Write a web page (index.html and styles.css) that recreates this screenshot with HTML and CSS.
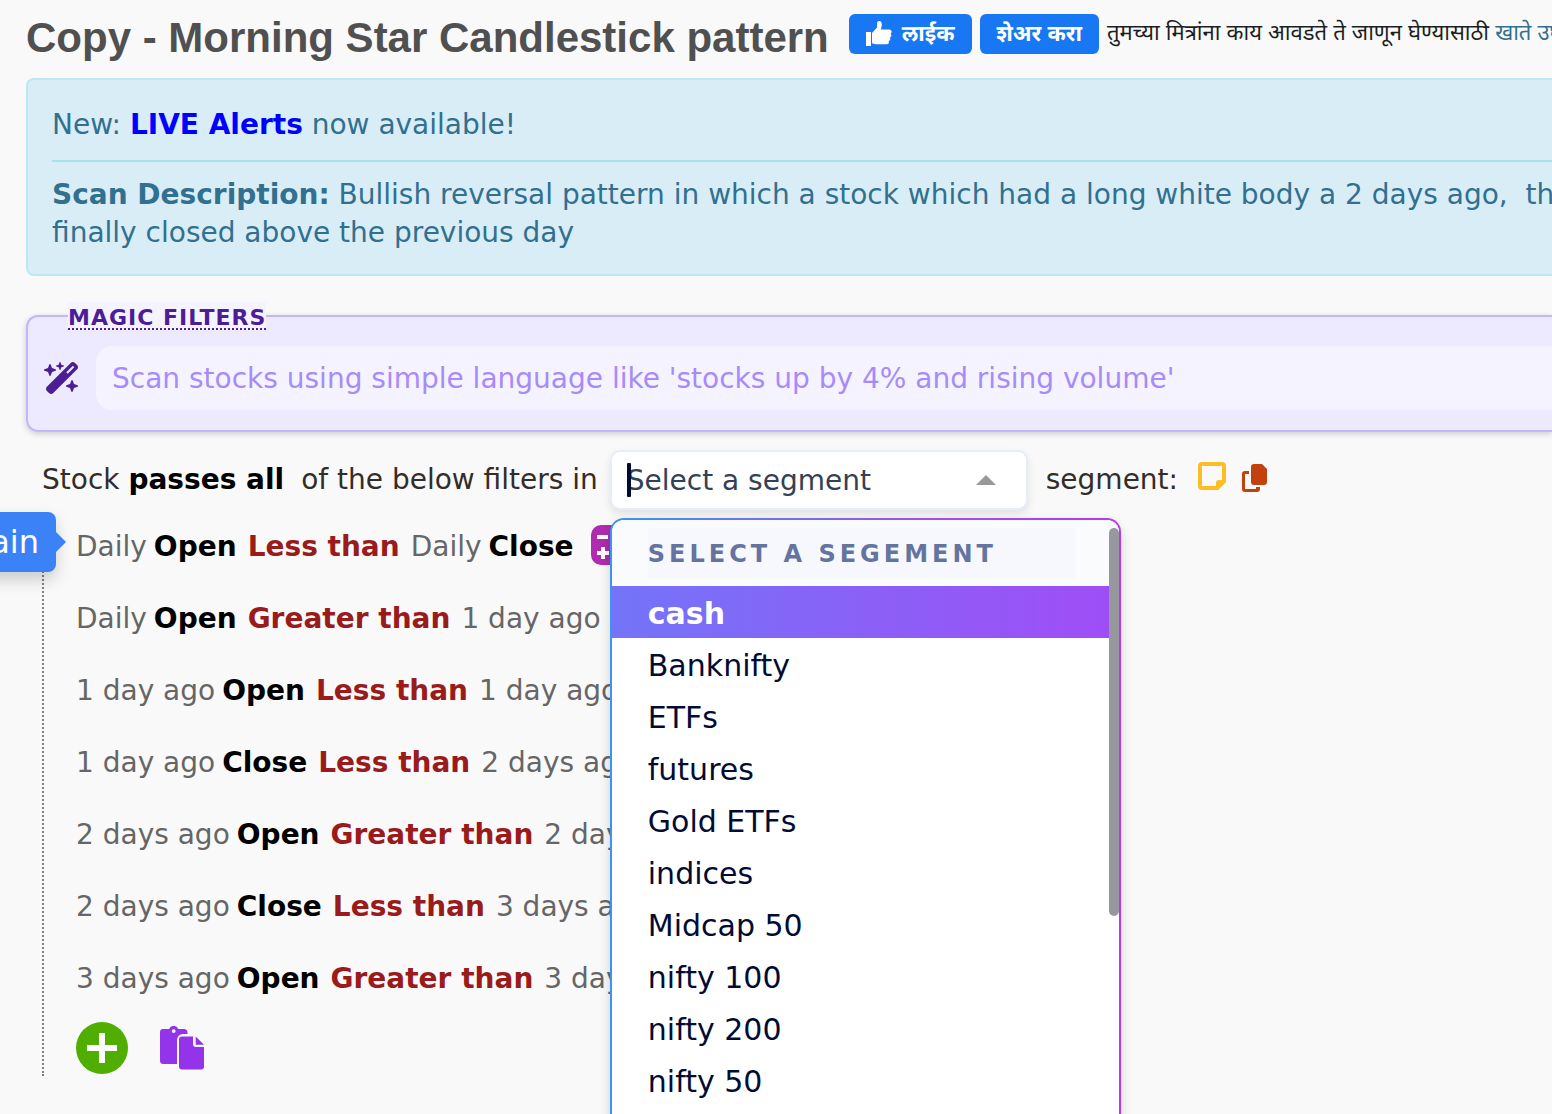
FILE: index.html
```html
<!DOCTYPE html>
<html lang="en">
<head>
<meta charset="utf-8">
<title>Copy - Morning Star Candlestick pattern</title>
<link rel="stylesheet" href="styles.css">
</head>
<body>
<header class="top">
  <h1 class="title">Copy - Morning Star Candlestick pattern</h1>
  <div class="social" lang="mr">
    <button class="fb" type="button">
      <svg class="thumb" viewBox="0 0 26 26" aria-hidden="true"><path fill="#fff" d="M0 11h5v14H0zM6 12l5-5.500V2.500C11 .8 12.200 0 13.300 0c1.800 0 2.500 1.600 2.500 3.800 0 1.800-.6 3.500-1 4.700H23c1.700 0 2.600 1 2.600 2.200 0 1-.6 1.700-1.300 2 .7.3 1.100 1 1.100 1.800 0 1.100-.8 1.900-1.700 2.100.4.4.6.9.6 1.500 0 1-.7 1.800-1.700 2 .2.300.3.700.3 1.100 0 1.200-.9 2-2.200 2H11c-2 0-3.500-.5-5-1z"/></svg>
      <span>लाईक</span>
    </button>
    <button class="fb" type="button">शेअर करा</button>
    <p class="hint">तुमच्या मित्रांना काय आवडते ते जाणून घेण्यासाठी <a href="#">खाते उघडा</a></p>
  </div>
</header>

<main class="page">
  <section class="notice">
    <p class="news">New: <a href="#">LIVE Alerts</a> now available!</p>
    <p class="about"><b>Scan Description:</b> Bullish reversal pattern in which a stock which had a long white body a 2 days ago,&nbsp; then<br>finally closed above the previous day</p>
  </section>

  <fieldset class="magic">
    <legend>MAGIC FILTERS</legend>
    <div class="magic-row">
      <svg class="wand" viewBox="0 0 576 512" aria-hidden="true"><path fill="#4c1d95" d="M234.700 42.700L197 56.800c-3 1.100-5 4-5 7.200s2 6.100 5 7.200l37.700 14.100L248.800 123c1.100 3 4 5 7.200 5s6.100-2 7.200-5l14.100-37.700L315 71.200c3-1.100 5-4 5-7.200s-2-6.100-5-7.200L277.300 42.700 263.200 5c-1.100-3-4-5-7.200-5s-6.100 2-7.200 5L234.700 42.700zM46.100 395.400c-18.700 18.700-18.700 49.100 0 67.900l34.600 34.600c18.700 18.700 49.100 18.700 67.900 0L529.900 116.500c18.700-18.700 18.700-49.100 0-67.900L495.300 14.100c-18.700-18.700-49.100-18.700-67.900 0L46.100 395.400zM484.600 82.600l-105 105-23.300-23.300 105-105 23.300 23.300zM7.500 117.200C3 118.900 0 123.200 0 128s3 9.100 7.500 10.800L64 160l21.200 56.500c1.700 4.500 6 7.500 10.800 7.500s9.100-3 10.800-7.500L128 160l56.500-21.200c4.500-1.700 7.500-6 7.500-10.800s-3-9.100-7.500-10.800L128 96 106.800 39.500C105.100 35 100.800 32 96 32s-9.100 3-10.800 7.500L64 96 7.500 117.200zm352 256c-4.500 1.700-7.500 6-7.500 10.800s3 9.100 7.500 10.800L416 416l21.200 56.500c1.700 4.500 6 7.500 10.800 7.500s9.100-3 10.800-7.500L480 416l56.500-21.200c4.500-1.700 7.500-6 7.500-10.800s-3-9.100-7.500-10.800L480 352l-21.200-56.500c-1.700-4.500-6-7.500-10.800-7.500s-9.100 3-10.800 7.500L416 352l-56.500 21.200z"/></svg>
      <input class="magic-input" type="text" aria-label="Magic filters" placeholder="Scan stocks using simple language like 'stocks up by 4% and rising volume'">
    </div>
  </fieldset>

  <section class="scan">
    <div class="scan-head">
      <span>Stock <b>passes all</b></span>
      <span class="scan-of">of the below filters in</span>
      <div class="picker">
        <label class="combo">
          <input type="text" class="combo-input" role="combobox" aria-expanded="true" aria-controls="segments" aria-label="Segment" placeholder="Select a segment">
          <span class="caret"></span>
          <span class="arrow"></span>
        </label>
        <div class="menu">
          <div class="menu-head"><span>SELECT A SEGEMENT</span></div>
          <ul class="options" id="segments" role="listbox">
            <li class="active" role="option" aria-selected="true">cash</li>
            <li role="option">Banknifty</li>
            <li role="option">ETFs</li>
            <li role="option">futures</li>
            <li role="option">Gold ETFs</li>
            <li role="option">indices</li>
            <li role="option">Midcap 50</li>
            <li role="option">nifty 100</li>
            <li role="option">nifty 200</li>
            <li role="option">nifty 50</li>
          </ul>
          <span class="thumb-bar"></span>
        </div>
      </div>
      <span class="scan-end">segment:</span>
      <button class="icon-btn" type="button" aria-label="Note"><svg width="28" height="28" viewBox="0 0 28 28"><path fill="none" stroke="#fbbf24" stroke-width="4" stroke-linejoin="round" d="M4 2h20a2 2 0 0 1 2 2v15l-7 7H4a2 2 0 0 1-2-2V4a2 2 0 0 1 2-2z"/><path fill="#fbbf24" d="M28 18h-7a3 3 0 0 0-3 3v7h2l8-8z"/></svg></button>
      <button class="icon-btn copy" type="button" aria-label="Copy"><svg width="26" height="30" viewBox="0 0 26 30"><path fill="#c2410c" d="M12 1h8l5 5v13a3 3 0 0 1-3 3H12a3 3 0 0 1-3-3V4a3 3 0 0 1 3-3zM3 8h4v3H3v15h11v-2h4v2a3 3 0 0 1-3 3H3a3 3 0 0 1-3-3V11a3 3 0 0 1 3-3z"/></svg></button>
    </div>

    <div class="group">
      <span class="tag">Main</span>
      <ul class="rules">
        <li>Daily <b>Open</b> <em>Less than</em> Daily <b>Close</b>
          <svg class="calc" viewBox="0 0 40 40" aria-hidden="true"><rect width="40" height="40" rx="10" fill="#b02bb0"/><path stroke="#fff" stroke-width="4" d="M6 12h11M23 12h11M6 28h12M12 22v12M23 25h11M23 31h11"/></svg></li>
        <li>Daily <b>Open</b> <em>Greater than</em> 1 day ago</li>
        <li>1 day ago <b>Open</b> <em>Less than</em> 1 day ago</li>
        <li>1 day ago <b>Close</b> <em>Less than</em> 2 days ago</li>
        <li>2 days ago <b>Open</b> <em>Greater than</em> 2 days ago</li>
        <li>2 days ago <b>Close</b> <em>Less than</em> 3 days ago</li>
        <li>3 days ago <b>Open</b> <em>Greater than</em> 3 days ago</li>
      </ul>
      <div class="actions">
        <button class="icon-btn" type="button" aria-label="Add filter"><svg width="52" height="52" viewBox="0 0 52 52"><circle cx="26" cy="26" r="26" fill="#4fae00"/><path stroke="#fff" stroke-width="6" d="M26 11v30M11 26h30"/></svg></button>
        <button class="icon-btn" type="button" aria-label="Paste filter"><svg width="44" height="44" viewBox="0 0 44 44"><path fill="#9333ea" fill-rule="evenodd" d="M3 3h6.200a4.800 4.800 0 0 1 9 0H24a3.500 3.500 0 0 1 3.500 3.500V8H23a6 6 0 0 0-6 6v24H3.500A3.500 3.500 0 0 1 0 34.500V6a3 3 0 0 1 3-3zm10.700.2a1.900 1.900 0 1 0 0 3.800 1.900 1.900 0 0 0 0-3.800zM22 10.500h11V18a3 3 0 0 0 3 3h8v19.500a3 3 0 0 1-3 3H22a3 3 0 0 1-3-3v-27a3 3 0 0 1 3-3zM35.700 10.500l8.300 8.200h-8.300z"/></svg></button>
      </div>
    </div>
  </section>
</main>
</body>
</html>
```
FILE: styles.css
```css
* { box-sizing: border-box; }
body {
  margin: 0;
  height: 100vh;
  overflow: hidden;
  background: #f9f9f9;
  color: #332d29;
  font: 28px/38px "DejaVu Sans", sans-serif;
}
h1, p, ul { margin: 0; padding: 0; }
ul { list-style: none; }
a { text-decoration: none; }
button { border: 0; padding: 0; background: none; font: inherit; }
svg { display: block; flex: none; }

.top {
  display: flex;
  align-items: flex-start;
  gap: 20px;
  height: 78px;
  padding: 14px 0 0 26px;
  white-space: nowrap;
}
.title {
  color: #505050;
  font: bold 42px/48px "Liberation Sans", sans-serif;
}
.social {
  display: flex;
  gap: 8px;
  color: #1c1e21;
  font: 22px/38px "Liberation Sans", "Noto Sans Devanagari", sans-serif;
}
.fb {
  display: flex;
  align-items: center;
  gap: 10px;
  height: 40px;
  padding: 0 17px;
  border-radius: 6px;
  background: #1877f2;
  color: #fff;
  font-weight: bold;
}
.thumb { width: 26px; height: 26px; }
.hint a { color: #31708f; }

.page { padding-left: 26px; }
.notice {
  padding: 26px 0 22px 24px;
  border: 2px solid #bce8f1;
  border-right: 0;
  border-radius: 8px 0 0 8px;
  background: #d9edf7;
  color: #31708f;
  white-space: nowrap;
  overflow: hidden;
}
.news {
  padding-bottom: 16px;
  border-bottom: 2px solid #a6e1ec;
}
.news a { color: #00f; font-weight: bold; }
.about { padding-top: 14px; }

.magic {
  min-width: 0;
  margin: 26px 0 0;
  padding: 16px 0 20px 16px;
  border: 2px solid #c4b5fd;
  border-right: 0;
  border-radius: 12px 0 0 12px;
  background: #ede9fe;
  box-shadow: 0 2px 6px rgba(0, 0, 0, .18);
}
.magic legend {
  margin-left: 24px;
  padding: 6px 0 0;
  border-bottom: 2px dotted #4c1d95;
  background: #f5f3ff;
  color: #4c1d95;
  font-size: 22px;
  font-weight: bold;
  line-height: 20px;
  letter-spacing: 1px;
}
.magic-row { display: flex; align-items: center; gap: 16px; }
.wand { width: 36px; height: 32px; }
.magic-input {
  flex: 1;
  min-width: 0;
  height: 64px;
  padding: 0 16px;
  border: 0;
  border-radius: 16px 0 0 16px;
  background: #f5f3ff;
  font: inherit;
}
.magic-input::placeholder { color: #a78bfa; }

.scan { padding-left: 16px; }
.scan-head {
  display: flex;
  align-items: center;
  height: 60px;
  margin-top: 18px;
  white-space: nowrap;
}
.scan-head b { color: #000; }
.scan-of { margin-left: 17px; }
.picker { position: relative; margin-left: 12px; }
.combo {
  display: flex;
  align-items: center;
  position: relative;
  width: 418px;
  height: 60px;
  padding: 0 30px 0 15px;
  border: 2px solid #e6ecfc;
  border-radius: 10px;
  background: #fff;
  box-shadow: 0 4px 8px rgba(0, 0, 0, .1);
}
.combo-input {
  flex: 1;
  min-width: 0;
  height: 48px;
  padding: 0;
  border: 0;
  background: none;
  font: inherit;
}
.combo-input::placeholder { color: #334155; }
.caret {
  position: absolute;
  left: 15px;
  top: 11px;
  width: 4px;
  height: 34px;
  border-radius: 1px;
  background: #020c33;
}
.arrow {
  border: 10px solid transparent;
  border-top: 0;
  border-bottom-color: #999;
}
.menu {
  position: absolute;
  z-index: 2;
  top: 68px;
  left: 0;
  width: 511px;
  padding-bottom: 20px;
  border: 2px solid transparent;
  border-radius: 14px;
  background: linear-gradient(#fff, #fff) padding-box, linear-gradient(90deg, #3b93f5, #a24bf5 65%, #b43af0) border-box;
  box-shadow: 0 6px 12px rgba(0, 0, 0, .16);
  color: #020c33;
}
.menu-head {
  height: 66px;
  padding: 8px 44px 8px 36px;
  border-radius: 12px 12px 0 0;
  background: #f9fbfd;
  color: #64749f;
  font-size: 24px;
  font-weight: bold;
  line-height: 52px;
  letter-spacing: 4px;
}
.menu-head span { display: block; height: 50px; background: #f6f8fe; }
.options { font-size: 30px; }
.options li { height: 52px; padding: 0 36px; line-height: 56px; white-space: nowrap; }
.options .active {
  background: linear-gradient(90deg, #7474f8, #a04df6);
  color: #fff;
  font-weight: bold;
}
.thumb-bar {
  position: absolute;
  top: 8px;
  right: 0;
  width: 10px;
  height: 388px;
  border-radius: 5px;
  background: #97989d;
}
.scan-end { margin-left: 18px; }
.scan-head .icon-btn { margin: 0 0 8px 20px; }
.scan-head .copy { margin: 0 0 4px 16px; }

.group {
  position: relative;
  margin-top: 2px;
  border-left: 2px dotted #808080;
  padding-left: 32px;
}
.tag {
  position: absolute;
  top: 0;
  right: 100%;
  margin-right: -12px;
  height: 60px;
  padding: 0 17px;
  border-radius: 8px;
  background: #3b82f6;
  box-shadow: 0 8px 16px rgba(0, 0, 0, .18);
  color: #fff;
  font-size: 32px;
  line-height: 60px;
}
.tag::after {
  content: "";
  position: absolute;
  left: 100%;
  top: 20px;
  border: 10px solid transparent;
  border-left-color: #3b82f6;
  border-right: 0;
}
.rules { color: #666; white-space: nowrap; }
.rules li { display: flex; align-items: center; gap: 7px; height: 72px; padding-bottom: 2px; }
.rules b { color: #000; }
.rules em { margin: 0 4px; color: #991b1b; font-style: normal; font-weight: bold; }
.calc { width: 40px; height: 40px; margin: 0 0 4px 10px; }
.actions { display: flex; align-items: center; gap: 32px; height: 60px; padding-top: 4px; }
```
